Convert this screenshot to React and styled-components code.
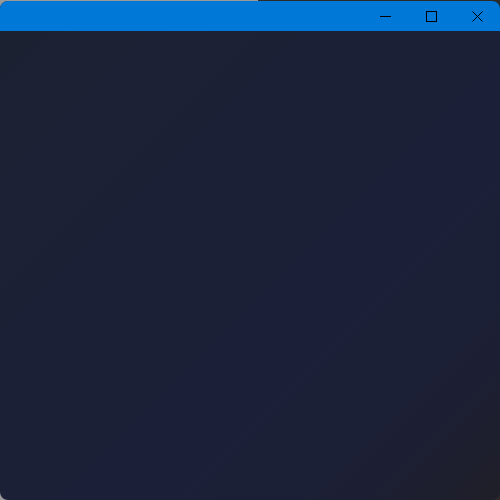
import styled, { createGlobalStyle } from "styled-components";

const Global = createGlobalStyle`
  html, body {
    margin: 0;
    padding: 0;
    width: 500px;
    height: 500px;
    overflow: hidden;
    background: linear-gradient(90deg, #9a9a9a 0, #9a9a9a 258px, #2b2b2b 258px);
    font-family: "Segoe UI", "Noto Sans", sans-serif;
  }
`;

const Window = styled.div`
  width: 500px;
  height: 499px;
  margin-top: 1px;
  border-radius: 8px;
  overflow: hidden;
  display: flex;
  flex-direction: column;
  background: linear-gradient(135deg, #1c2131 0%, #1b2036 35%, #1b2038 65%, #1c1f34 85%, #1f1f28 100%);
`;

const TitleBar = styled.div`
  height: 30px;
  flex: none;
  background: #0078d7;
  display: flex;
  justify-content: flex-end;
`;

const CaptionButton = styled.button`
  width: 46px;
  height: 30px;
  border: none;
  padding: 0;
  background: transparent;
  display: flex;
  align-items: center;
  justify-content: center;
  cursor: pointer;
  &:hover {
    background: ${(p) => (p.$close ? "#e81123" : "rgba(255,255,255,0.1)")};
  }
`;

const Body = styled.div`
  flex: 1;
`;

const App = () => {
  return (
    <>
      <Global />
      <Window>
        <TitleBar>
          <CaptionButton title="Minimize">
            <svg width="11" height="11" viewBox="0 0 11 11">
              <path d="M0 5.5h11" stroke="#000" strokeWidth="1" />
            </svg>
          </CaptionButton>
          <CaptionButton title="Maximize">
            <svg width="11" height="11" viewBox="0 0 11 11">
              <rect x="0.5" y="0.5" width="10" height="10" fill="none" stroke="#000" strokeWidth="1" />
            </svg>
          </CaptionButton>
          <CaptionButton $close title="Close">
            <svg width="11" height="11" viewBox="0 0 11 11">
              <path d="M0.5 0.5L10.5 10.5M10.5 0.5L0.5 10.5" stroke="#000" strokeWidth="1" />
            </svg>
          </CaptionButton>
        </TitleBar>
        <Body />
      </Window>
    </>
  );
};

export default App;
